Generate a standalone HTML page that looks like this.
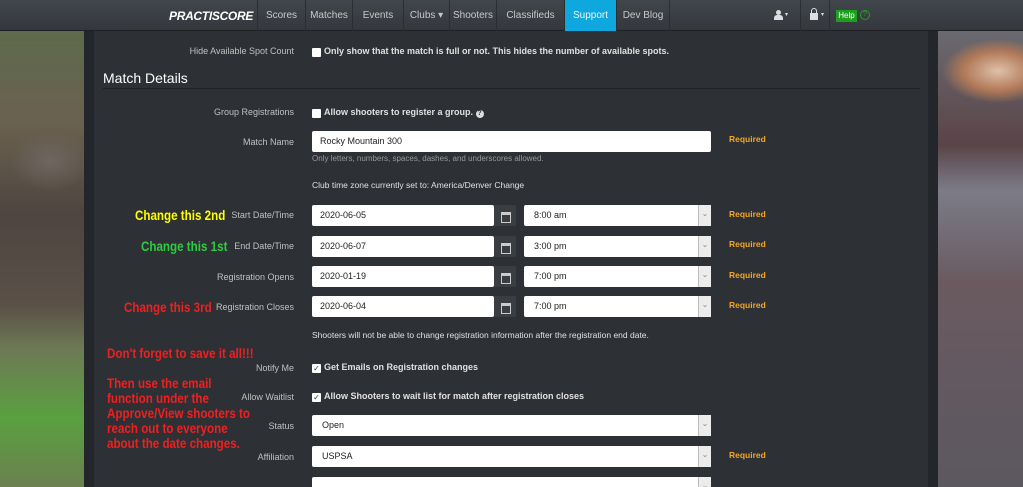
<!DOCTYPE html>
<html><head><meta charset="utf-8"><style>
*{margin:0;padding:0;box-sizing:border-box}
html,body{width:1023px;height:487px;overflow:hidden}
body{position:relative;font-family:"Liberation Sans",sans-serif;background:#333}
.a{position:absolute;white-space:nowrap}
#bgl{left:0;top:31px;width:85px;height:456px;background:radial-gradient(ellipse 40px 30px at 50px 130px,#6e6660,transparent),linear-gradient(180deg,#5d6a4c 0,#6b6150 20%,#4e4540 40%,#5a5048 60%,#6d7a55 70%,#5aa040 85%,#6c8050 100%)}
#bgr{left:938px;top:31px;width:85px;height:456px;background:radial-gradient(ellipse 70px 40px at 60px 40px,#e0c0a8,#b07858 50%,transparent 80%),linear-gradient(180deg,#6a6a70 0,#5a4448 25%,#7b7c88 35%,#6a5a60 55%,#5c5860 100%)}
#panel{left:84px;top:31px;width:854px;height:456px;background:#23262a}
#content{left:94px;top:31px;width:834px;height:456px;background:#2d3035}
#nav{left:0;top:0;width:1023px;height:31px;background:linear-gradient(#41464c,#34383d);border-bottom:1px solid #1d1f22}
.ni{top:0;height:31px;line-height:31px;color:#c8c8c8;font-size:10px;text-align:center;border-left:1px solid #2a2e32}
.lab{color:#c0c0c0;font-size:9px;text-align:right;width:200px;left:94px}
.txt{color:#e0e0e0;font-size:9px}
.b{font-weight:bold}
.in{background:#fff;border-radius:2px;height:21px;color:#222;font-size:9px;line-height:21px;padding-left:8px}
.cal{background:#3a3e43;height:21px;width:22px;border-radius:0 2px 2px 0}
.cal:before{content:"";position:absolute;left:7px;top:7px;width:8px;height:7px;border:1.5px solid #ccc;border-top-width:3px}
.sel{background:#fff;border-radius:2px;height:21px;color:#222;font-size:9px;line-height:21px;padding-left:10px}
.sel:after{content:"⌄";position:absolute;right:0;top:0;width:12px;height:21px;background:#ececec;border-left:1px solid #bbb;color:#888;font-size:8px;line-height:17px;text-align:center}
.req{color:#f5a623;font-size:8.5px;font-weight:bold;left:729px}
.cb{width:9px;height:9px;background:#fff;border-radius:1px}
.ann{font-weight:bold;font-size:13.5px;transform:scaleX(.86);transform-origin:left}
</style></head><body>
<div class="a" id="bgl"></div><div class="a" id="bgr"></div>
<div class="a" id="panel"></div><div class="a" id="content"></div>
<div class="a" id="nav"></div>
<div class="a b" style="left:169px;top:9px;color:#fff;font-size:12px;font-style:italic;letter-spacing:-.3px">PRACTISCORE</div>
<div class="a ni" style="left:257px;width:48px">Scores</div>
<div class="a ni" style="left:305px;width:47px">Matches</div>
<div class="a ni" style="left:352px;width:51px">Events</div>
<div class="a ni" style="left:403px;width:46px">Clubs ▾</div>
<div class="a ni" style="left:449px;width:47px">Shooters</div>
<div class="a ni" style="left:496px;width:68px">Classifieds</div>
<div class="a ni" style="left:564px;width:52px;background:#0ea8df;color:#e8f6ff">Support</div>
<div class="a ni" style="left:616px;width:54px;border-right:1px solid #2a2e32">Dev Blog</div>
<div class="a" style="left:800px;top:0;width:1px;height:31px;background:#2a2e32"></div>
<div class="a" style="left:829px;top:0;width:1px;height:31px;background:#2a2e32"></div>
<div class="a" style="left:776px;top:10px;width:5px;height:5px;background:#ddd;border-radius:50%"></div>
<div class="a" style="left:774px;top:15px;width:9px;height:5px;background:#ddd;border-radius:3px 3px 0 0"></div>
<div class="a" style="left:785px;top:11px;color:#ddd;font-size:6px">▾</div>
<div class="a" style="left:810px;top:13px;width:8px;height:7px;background:#ddd"></div>
<div class="a" style="left:811px;top:8px;width:6px;height:7px;border:1.5px solid #ddd;border-radius:3px 3px 0 0"></div>
<div class="a" style="left:821px;top:11px;color:#ddd;font-size:6px">▾</div>
<div class="a" style="left:836px;top:10px;width:21px;height:12px;background:#1da01d;color:#fff;font-size:8px;line-height:12px;text-align:center">Help</div>
<div class="a" style="left:860px;top:10px;width:10px;height:10px;border:1px solid #1da01d;border-radius:50%;color:#1da01d;font-size:7px;line-height:8px;text-align:center">?</div>

<div class="a lab" style="top:46px">Hide Available Spot Count</div>
<div class="a cb" style="left:312px;top:48px"></div>
<div class="a txt b" style="left:324px;top:46px">Only show that the match is full or not. This hides the number of available spots.</div>
<div class="a" style="left:103px;top:70px;color:#fff;font-size:14px">Match Details</div>
<div class="a" style="left:103px;top:88px;width:817px;height:1px;background:#1e2124"></div>

<div class="a lab" style="top:107px">Group Registrations</div>
<div class="a cb" style="left:312px;top:109px"></div>
<div class="a txt b" style="left:324px;top:107px">Allow shooters to register a group. <span style="display:inline-block;width:8px;height:8px;background:#ddd;border-radius:50%;color:#2d3035;font-size:7px;line-height:8px;text-align:center">?</span></div>
<div class="a lab" style="top:137px">Match Name</div>
<div class="a in" style="left:312px;top:131px;width:399px">Rocky Mountain 300</div>
<div class="a req" style="top:134px">Required</div>
<div class="a" style="left:312px;top:154px;color:#999;font-size:8px">Only letters, numbers, spaces, dashes, and underscores allowed.</div>
<div class="a txt" style="left:312px;top:180px;font-size:8.5px">Club time zone currently set to: America/Denver Change</div>

<div class="a lab" style="top:210px">Start Date/Time</div>
<div class="a in" style="left:312px;top:205px;width:182px">2020-06-05</div><div class="a cal" style="left:494px;top:205px"></div>
<div class="a sel" style="left:524px;top:205px;width:187px">8:00 am</div><div class="a req" style="top:209px">Required</div>
<div class="a lab" style="top:241px">End Date/Time</div>
<div class="a in" style="left:312px;top:236px;width:182px">2020-06-07</div><div class="a cal" style="left:494px;top:236px"></div>
<div class="a sel" style="left:524px;top:236px;width:187px">3:00 pm</div><div class="a req" style="top:239px">Required</div>
<div class="a lab" style="top:272px">Registration Opens</div>
<div class="a in" style="left:312px;top:266px;width:182px">2020-01-19</div><div class="a cal" style="left:494px;top:266px"></div>
<div class="a sel" style="left:524px;top:266px;width:187px">7:00 pm</div><div class="a req" style="top:270px">Required</div>
<div class="a lab" style="top:302px">Registration Closes</div>
<div class="a in" style="left:312px;top:296px;width:182px">2020-06-04</div><div class="a cal" style="left:494px;top:296px"></div>
<div class="a sel" style="left:524px;top:296px;width:187px">7:00 pm</div><div class="a req" style="top:300px">Required</div>
<div class="a txt" style="left:312px;top:330px;font-size:8.5px">Shooters will not be able to change registration information after the registration end date.</div>

<div class="a lab" style="top:363px">Notify Me</div>
<div class="a cb" style="left:312px;top:364px;color:#333;font-size:8px;line-height:9px;text-align:center">✓</div>
<div class="a txt b" style="left:324px;top:362px">Get Emails on Registration changes</div>
<div class="a lab" style="top:392px">Allow Waitlist</div>
<div class="a cb" style="left:312px;top:393px;color:#333;font-size:8px;line-height:9px;text-align:center">✓</div>
<div class="a txt b" style="left:324px;top:391px">Allow Shooters to wait list for match after registration closes</div>
<div class="a lab" style="top:421px">Status</div>
<div class="a sel" style="left:312px;top:415px;width:399px">Open</div>
<div class="a lab" style="top:452px">Affiliation</div>
<div class="a sel" style="left:312px;top:446px;width:399px">USPSA</div><div class="a req" style="top:450px">Required</div>
<div class="a sel" style="left:312px;top:477px;width:399px"></div>

<div class="a ann" style="left:135px;top:208px;color:#ffff00">Change this 2nd</div>
<div class="a ann" style="left:141px;top:239px;color:#2ecc40">Change this 1st</div>
<div class="a ann" style="left:124px;top:300px;color:#f02020">Change this 3rd</div>
<div class="a ann" style="left:107px;top:346px;color:#f02020">Don't forget to save it all!!!</div>
<div class="a ann" style="left:107px;top:376px;color:#f02020;line-height:15px;white-space:normal;width:200px">Then use the email<br>function under the<br>Approve/View shooters to<br>reach out to everyone<br>about the date changes.</div>
</body></html>
